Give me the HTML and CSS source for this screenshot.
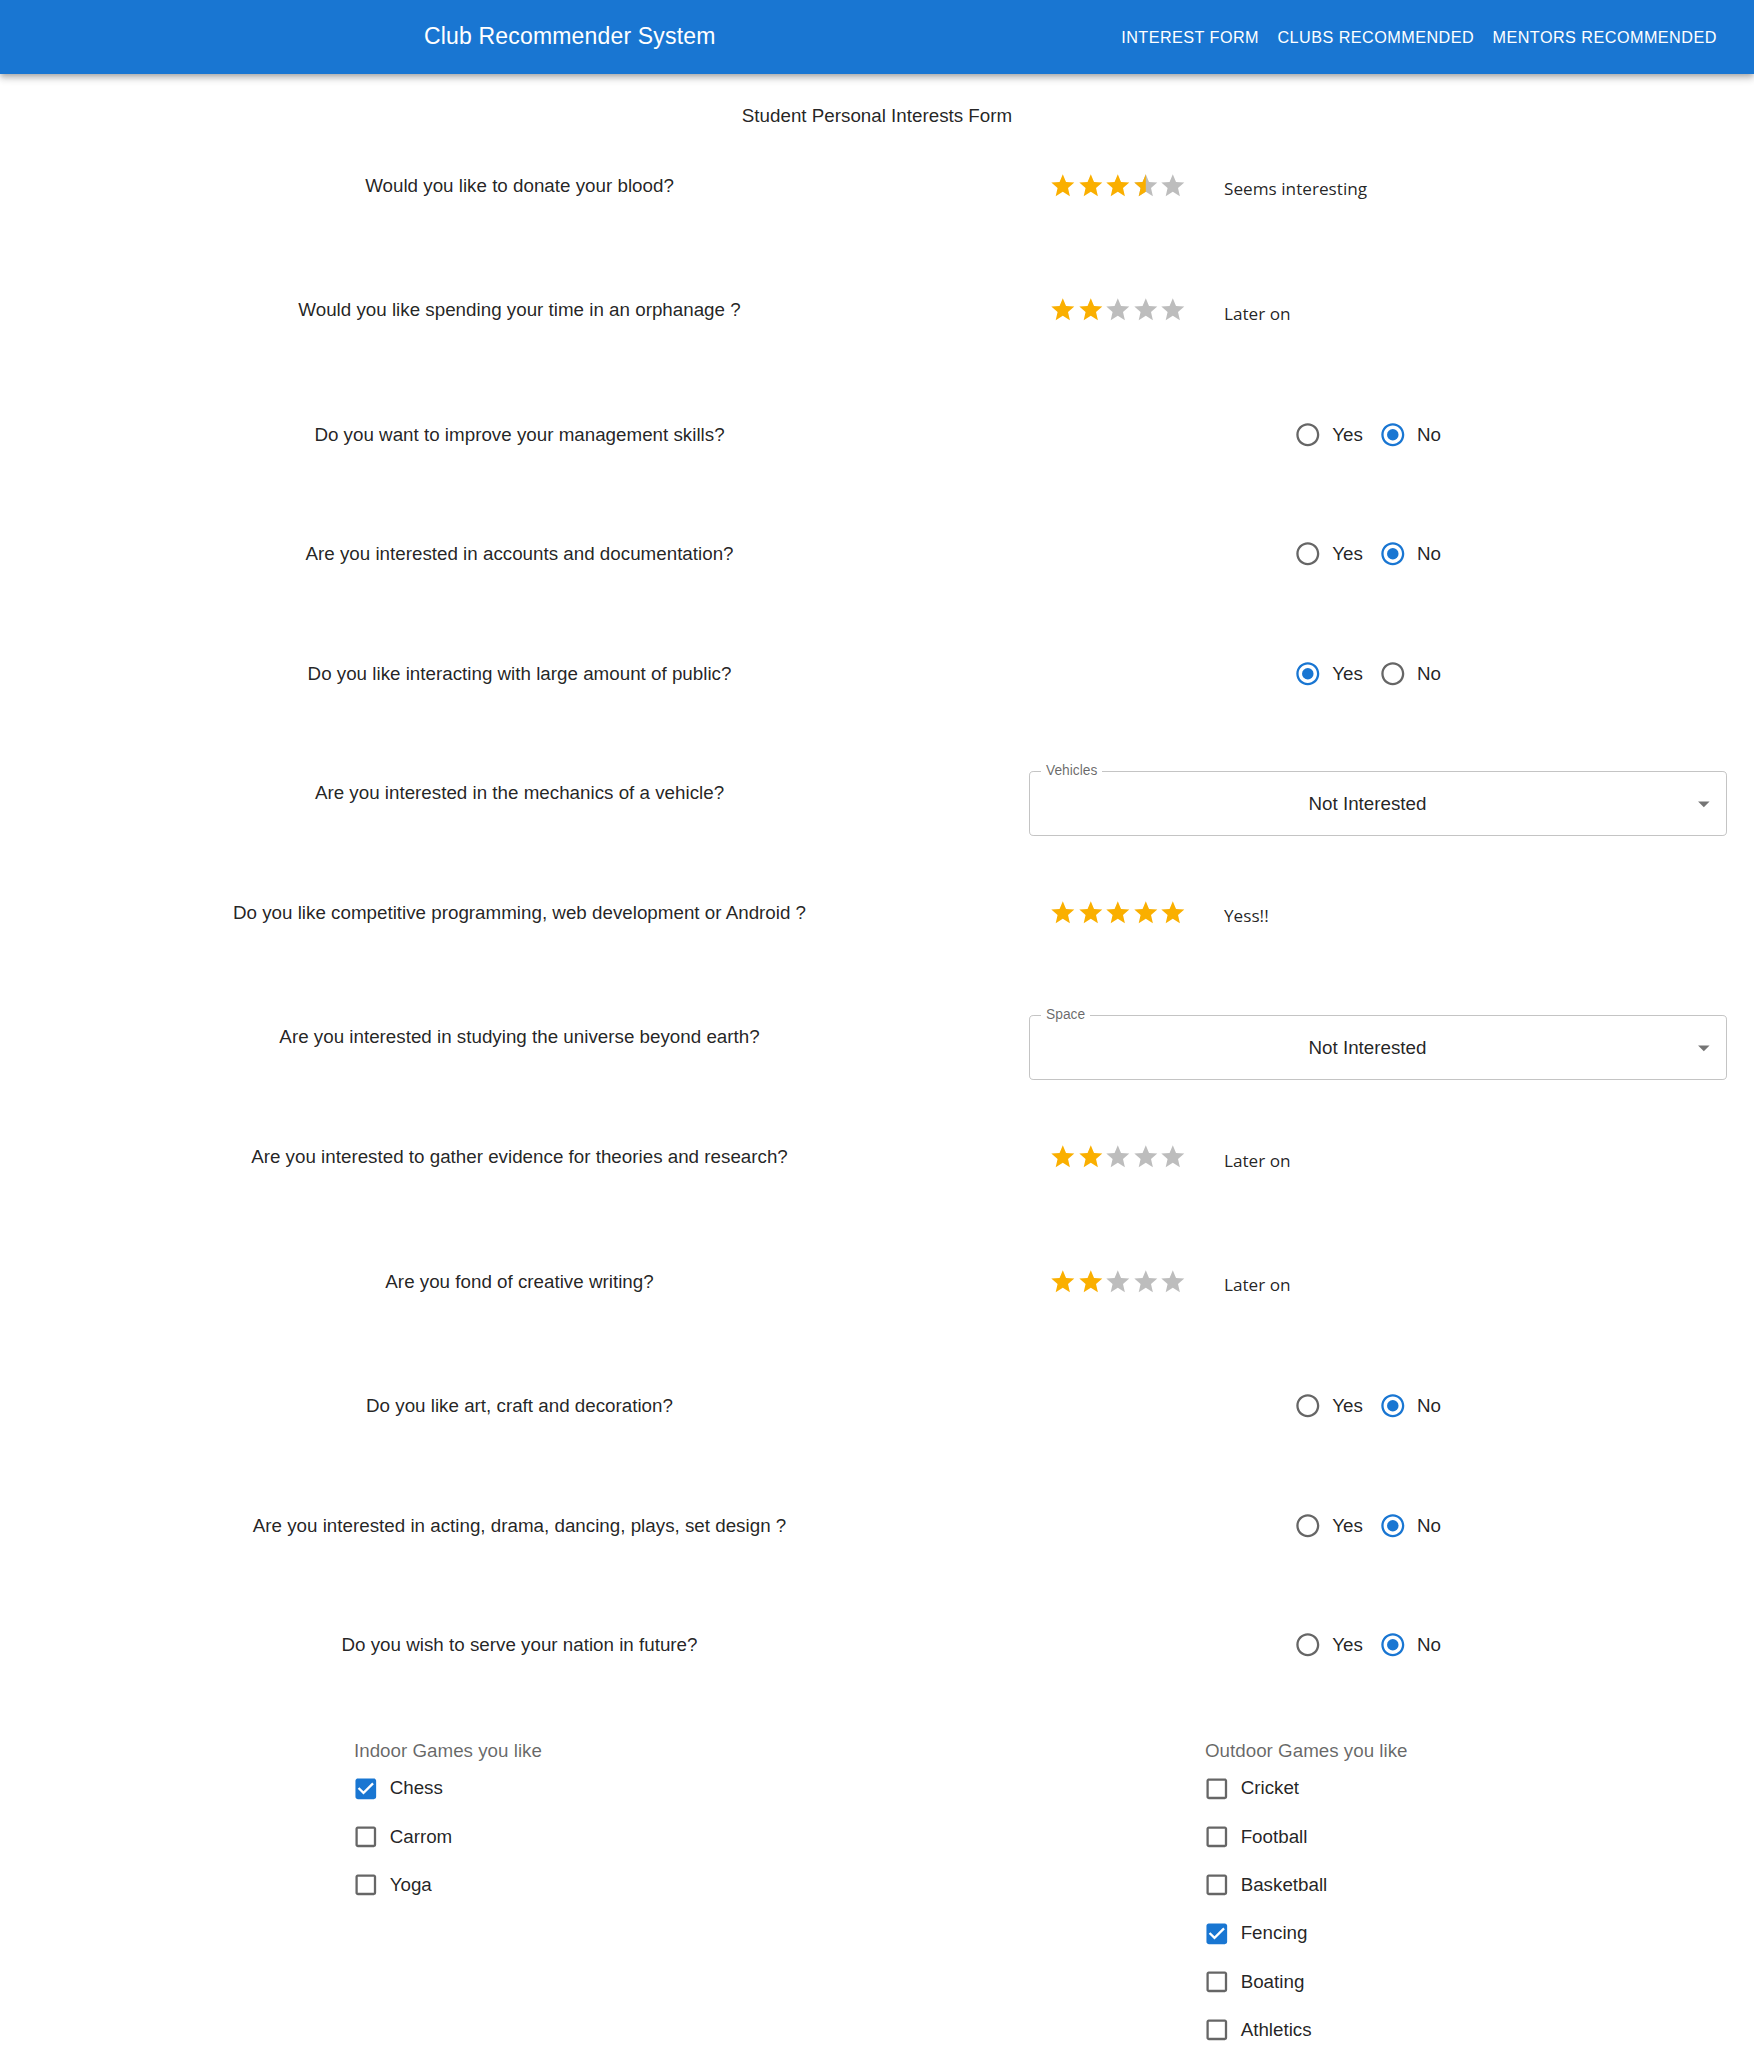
FILE: index.html
```html
<!DOCTYPE html>
<html lang="en">
<head>
    <meta charset="UTF-8">
    <meta name="viewport" content="width=device-width, initial-scale=1.0">
    <title>Club Recommender System</title>
    <link rel="stylesheet" href="styles.css">
</head>
<body>
<svg class="sprite" xmlns="http://www.w3.org/2000/svg">
    <defs>
        <symbol id="star" viewBox="0 0 24 24"><path d="M12 17.27L18.18 21l-1.64-7.03L22 9.24l-7.19-.61L12 2 9.19 8.63 2 9.24l5.46 4.73L5.82 21z"/></symbol>
        <clipPath id="half"><rect x="0" y="0" width="12" height="24"/></clipPath>
        <symbol id="radio-off" viewBox="0 0 24 24"><path d="M12 2C6.48 2 2 6.48 2 12s4.48 10 10 10 10-4.48 10-10S17.52 2 12 2zm0 18c-4.42 0-8-3.58-8-8s3.58-8 8-8 8 3.58 8 8-3.58 8-8 8z"/></symbol>
        <symbol id="radio-on" viewBox="0 0 24 24"><path d="M12 2C6.48 2 2 6.48 2 12s4.48 10 10 10 10-4.48 10-10S17.52 2 12 2zm0 18c-4.42 0-8-3.58-8-8s3.58-8 8-8 8 3.58 8 8-3.58 8-8 8z"/><circle cx="12" cy="12" r="5"/></symbol>
        <symbol id="box-off" viewBox="0 0 24 24"><path d="M19 5v14H5V5h14m0-2H5c-1.11 0-2 .9-2 2v14c0 1.1.89 2 2 2h14c1.11 0 2-.9 2-2V5c0-1.1-.89-2-2-2z"/></symbol>
        <symbol id="box-on" viewBox="0 0 24 24"><path d="M19 3H5c-1.11 0-2 .9-2 2v14c0 1.1.89 2 2 2h14c1.11 0 2-.9 2-2V5c0-1.1-.89-2-2-2zm-9 14l-5-5 1.41-1.41L10 14.17l7.59-7.59L19 8l-9 9z"/></symbol>
        <symbol id="arrow-drop" viewBox="0 0 24 24"><path d="M7 10l5 5 5-5z"/></symbol>
    </defs>
</svg>

<header class="app-bar">
    <div class="toolbar">
        <div class="brand">Club Recommender System</div>
        <nav class="nav">
            <a class="nav-btn" href="#">Interest Form</a>
            <a class="nav-btn" href="#">Clubs Recommended</a>
            <a class="nav-btn" href="#">Mentors Recommended</a>
        </nav>
    </div>
</header>

<main class="form">
    <p class="form-title">Student Personal Interests Form</p>

    <div class="row tall">
        <div class="question">Would you like to donate your blood?</div>
        <div class="answer rating">
            <span class="stars">
                <svg class="star"><use href="#star"/></svg>
                <svg class="star"><use href="#star"/></svg>
                <svg class="star"><use href="#star"/></svg>
                <svg class="star half" viewBox="0 0 24 24"><use class="off" href="#star"/><use href="#star" clip-path="url(#half)"/></svg>
                <svg class="star off"><use href="#star"/></svg>
            </span>
            <span class="rating-label">Seems interesting</span>
        </div>
    </div>

    <div class="row tall">
        <div class="question">Would you like spending your time in an orphanage ?</div>
        <div class="answer rating">
            <span class="stars">
                <svg class="star"><use href="#star"/></svg>
                <svg class="star"><use href="#star"/></svg>
                <svg class="star off"><use href="#star"/></svg>
                <svg class="star off"><use href="#star"/></svg>
                <svg class="star off"><use href="#star"/></svg>
            </span>
            <span class="rating-label">Later on</span>
        </div>
    </div>

    <div class="row">
        <div class="question">Do you want to improve your management skills?</div>
        <div class="answer choice">
            <label class="choice-label"><span class="icon-btn"><svg class="icon"><use href="#radio-off"/></svg></span>Yes</label>
            <label class="choice-label"><span class="icon-btn"><svg class="icon on"><use href="#radio-on"/></svg></span>No</label>
        </div>
    </div>

    <div class="row">
        <div class="question">Are you interested in accounts and documentation?</div>
        <div class="answer choice">
            <label class="choice-label"><span class="icon-btn"><svg class="icon"><use href="#radio-off"/></svg></span>Yes</label>
            <label class="choice-label"><span class="icon-btn"><svg class="icon on"><use href="#radio-on"/></svg></span>No</label>
        </div>
    </div>

    <div class="row">
        <div class="question">Do you like interacting with large amount of public?</div>
        <div class="answer choice">
            <label class="choice-label"><span class="icon-btn"><svg class="icon on"><use href="#radio-on"/></svg></span>Yes</label>
            <label class="choice-label"><span class="icon-btn"><svg class="icon"><use href="#radio-off"/></svg></span>No</label>
        </div>
    </div>

    <div class="row">
        <div class="question">Are you interested in the mechanics of a vehicle?</div>
        <div class="answer pick">
            <div class="select">
                <span class="select-label">Vehicles</span>
                <span class="select-value">Not Interested</span>
                <svg class="select-arrow"><use href="#arrow-drop"/></svg>
            </div>
        </div>
    </div>

    <div class="row tall">
        <div class="question">Do you like competitive programming, web development or Android ?</div>
        <div class="answer rating">
            <span class="stars">
                <svg class="star"><use href="#star"/></svg>
                <svg class="star"><use href="#star"/></svg>
                <svg class="star"><use href="#star"/></svg>
                <svg class="star"><use href="#star"/></svg>
                <svg class="star"><use href="#star"/></svg>
            </span>
            <span class="rating-label">Yess!!</span>
        </div>
    </div>

    <div class="row">
        <div class="question">Are you interested in studying the universe beyond earth?</div>
        <div class="answer pick">
            <div class="select">
                <span class="select-label">Space</span>
                <span class="select-value">Not Interested</span>
                <svg class="select-arrow"><use href="#arrow-drop"/></svg>
            </div>
        </div>
    </div>

    <div class="row tall">
        <div class="question">Are you interested to gather evidence for theories and research?</div>
        <div class="answer rating">
            <span class="stars">
                <svg class="star"><use href="#star"/></svg>
                <svg class="star"><use href="#star"/></svg>
                <svg class="star off"><use href="#star"/></svg>
                <svg class="star off"><use href="#star"/></svg>
                <svg class="star off"><use href="#star"/></svg>
            </span>
            <span class="rating-label">Later on</span>
        </div>
    </div>

    <div class="row tall">
        <div class="question">Are you fond of creative writing?</div>
        <div class="answer rating">
            <span class="stars">
                <svg class="star"><use href="#star"/></svg>
                <svg class="star"><use href="#star"/></svg>
                <svg class="star off"><use href="#star"/></svg>
                <svg class="star off"><use href="#star"/></svg>
                <svg class="star off"><use href="#star"/></svg>
            </span>
            <span class="rating-label">Later on</span>
        </div>
    </div>

    <div class="row">
        <div class="question">Do you like art, craft and decoration?</div>
        <div class="answer choice">
            <label class="choice-label"><span class="icon-btn"><svg class="icon"><use href="#radio-off"/></svg></span>Yes</label>
            <label class="choice-label"><span class="icon-btn"><svg class="icon on"><use href="#radio-on"/></svg></span>No</label>
        </div>
    </div>

    <div class="row">
        <div class="question">Are you interested in acting, drama, dancing, plays, set design ?</div>
        <div class="answer choice">
            <label class="choice-label"><span class="icon-btn"><svg class="icon"><use href="#radio-off"/></svg></span>Yes</label>
            <label class="choice-label"><span class="icon-btn"><svg class="icon on"><use href="#radio-on"/></svg></span>No</label>
        </div>
    </div>

    <div class="row">
        <div class="question">Do you wish to serve your nation in future?</div>
        <div class="answer choice">
            <label class="choice-label"><span class="icon-btn"><svg class="icon"><use href="#radio-off"/></svg></span>Yes</label>
            <label class="choice-label"><span class="icon-btn"><svg class="icon on"><use href="#radio-on"/></svg></span>No</label>
        </div>
    </div>

    <div class="games">
        <div class="game-group">
            <div class="group-label">Indoor Games you like</div>
            <label class="check-label"><span class="icon-btn"><svg class="icon on"><use href="#box-on"/></svg></span>Chess</label>
            <label class="check-label"><span class="icon-btn"><svg class="icon"><use href="#box-off"/></svg></span>Carrom</label>
            <label class="check-label"><span class="icon-btn"><svg class="icon"><use href="#box-off"/></svg></span>Yoga</label>
        </div>
        <div class="game-group">
            <div class="group-label">Outdoor Games you like</div>
            <label class="check-label"><span class="icon-btn"><svg class="icon"><use href="#box-off"/></svg></span>Cricket</label>
            <label class="check-label"><span class="icon-btn"><svg class="icon"><use href="#box-off"/></svg></span>Football</label>
            <label class="check-label"><span class="icon-btn"><svg class="icon"><use href="#box-off"/></svg></span>Basketball</label>
            <label class="check-label"><span class="icon-btn"><svg class="icon on"><use href="#box-on"/></svg></span>Fencing</label>
            <label class="check-label"><span class="icon-btn"><svg class="icon"><use href="#box-off"/></svg></span>Boating</label>
            <label class="check-label"><span class="icon-btn"><svg class="icon"><use href="#box-off"/></svg></span>Athletics</label>
        </div>
    </div>
</main>
</body>
</html>
```

FILE: styles.css
```css
body {
    margin: 0;
    font-family: "Liberation Sans", Arial, sans-serif;
    font-size: 18.8px;
    color: rgba(0, 0, 0, 0.87);
    background: #fff;
}
/* icon defs only; kept rendered (not display:none) so clipPath works */
.sprite {
    position: absolute;
    width: 0;
    height: 0;
    overflow: hidden;
}
.app-bar {
    position: relative;
    z-index: 1;
    background-color: #1976d2;
    color: #fff;
    box-shadow: 0 2px 5px -1px rgba(0, 0, 0, 0.2), 0 5px 6px 0 rgba(0, 0, 0, 0.14), 0 1px 12px 0 rgba(0, 0, 0, 0.12);
}
.toolbar {
    display: flex;
    align-items: center;
    height: 73.6px;
    padding: 0 28px 0 424px;
}
.brand {
    flex: 1;
    font-size: 23px;
    letter-spacing: 0.17px;
    line-height: 1.6;
}
.nav {
    display: flex;
}
.nav-btn {
    padding: 7px 9.2px;
    color: #fff;
    text-decoration: none;
    text-transform: uppercase;
    font-size: 16.2px;
    letter-spacing: 0.46px;
    line-height: 1.75;
}
.form-title {
    margin: 28px 0 32px;
    line-height: 28px;
    text-align: center;
}
.row {
    display: grid;
    grid-template-columns: 1029px 698px;
    align-items: start;
    height: 119.6px;
}
.row.tall {
    height: 124.5px;
}
.question {
    height: 48px;
    line-height: 48px;
    padding-left: 10px;
    text-align: center;
}
.answer {
    display: flex;
    align-items: center;
    height: 48px;
}
.rating {
    padding-left: 20px;
}
.stars {
    display: inline-flex;
}
.star {
    width: 27.6px;
    height: 27.6px;
    fill: #faaf00;
}
.star.off, .star .off {
    fill: rgba(0, 0, 0, 0.26);
}
.rating-label {
    margin: 6px 0 0 37px;
    font-family: "Open Sans", "Noto Sans", sans-serif;
    font-size: 17.2px;
    color: rgba(0, 0, 0, 0.87);
}
.choice {
    justify-content: center;
}
.choice-label, .check-label {
    display: inline-flex;
    align-items: center;
    margin-left: -12.65px;
    margin-right: 18.4px;
    cursor: pointer;
}
.icon-btn {
    display: inline-flex;
    padding: 10.35px;
}
.icon {
    width: 27.6px;
    height: 27.6px;
    fill: rgba(0, 0, 0, 0.6);
}
.icon.on {
    fill: #1976d2;
}
.pick {
    align-items: flex-start;
}
.select {
    position: relative;
    display: flex;
    align-items: center;
    justify-content: center;
    box-sizing: border-box;
    width: 100%;
    height: 64.4px;
    margin-top: 2px;
    padding: 0 37px 0 16px;
    border: 1px solid rgba(0, 0, 0, 0.23);
    border-radius: 4.6px;
}
.select-label {
    position: absolute;
    top: -9px;
    left: 11px;
    padding: 0 5px;
    background: #fff;
    font-size: 13.8px;
    line-height: 16px;
    color: rgba(0, 0, 0, 0.6);
}
.select-value {
    line-height: 1.4375;
}
.select-arrow {
    position: absolute;
    right: 8px;
    top: 50%;
    width: 27.6px;
    height: 27.6px;
    margin-top: -13.8px;
    fill: rgba(0, 0, 0, 0.54);
}
.games {
    display: grid;
    grid-template-columns: 851px 1fr;
    margin-top: -3px;
    padding-left: 354px;
}
.game-group {
    display: flex;
    flex-direction: column;
    align-items: flex-start;
}
.group-label {
    line-height: 26.45px;
    color: rgba(0, 0, 0, 0.6);
}
.check-label {
    height: 48.3px;
}
```
